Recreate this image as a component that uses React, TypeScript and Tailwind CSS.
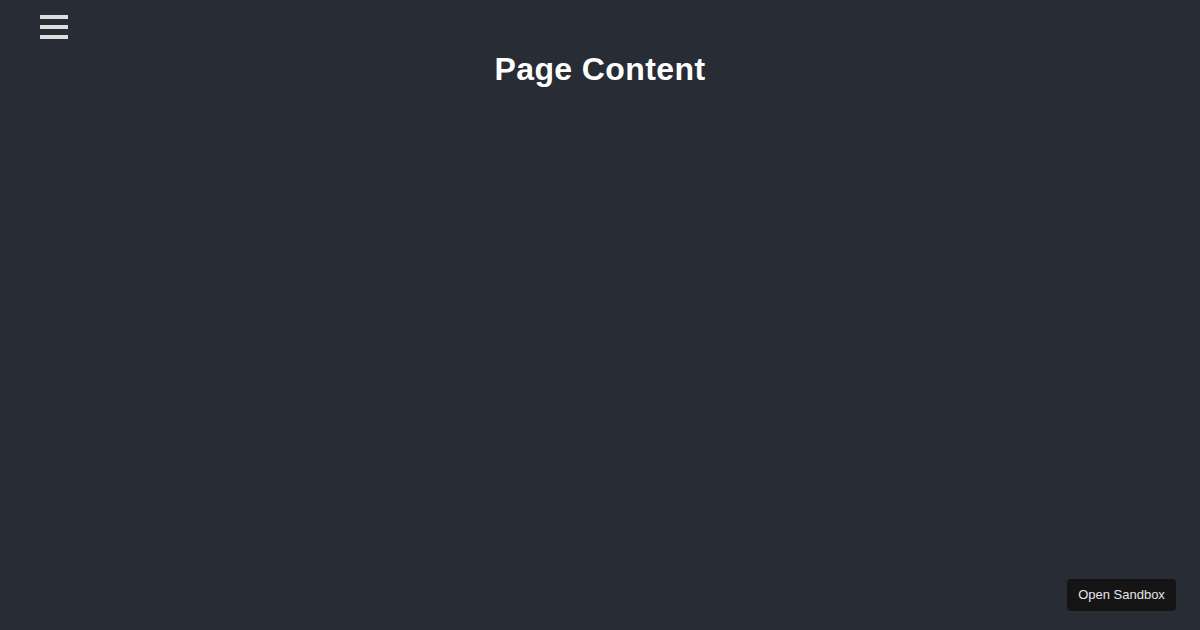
export default function App() {
  return (
    <div className="relative min-h-[630px] w-full bg-[#282c34] font-['Liberation_Sans',Arial,sans-serif] text-white">
      {/* Menu toggle */}
      <header className="pl-10 pt-[15px]">
        <button className="flex h-6 w-7 flex-col justify-between" aria-label="menu">
          <span className="block h-1 w-7 bg-[#dddddd]" />
          <span className="block h-1 w-7 bg-[#dddddd]" />
          <span className="block h-1 w-7 bg-[#dddddd]" />
        </button>
      </header>

      <main className="mt-[12px] text-center">
        <h1 className="text-[32px] font-bold leading-[37px] tracking-[0.4px]">Page Content</h1>
      </main>

      <a
        href="#"
        className="absolute bottom-[19px] right-[24px] flex h-8 w-[109px] items-center justify-center rounded-[4px] bg-[#151515] text-[13px] text-[#e5e5e5]"
      >
        Open Sandbox
      </a>
    </div>
  );
}
